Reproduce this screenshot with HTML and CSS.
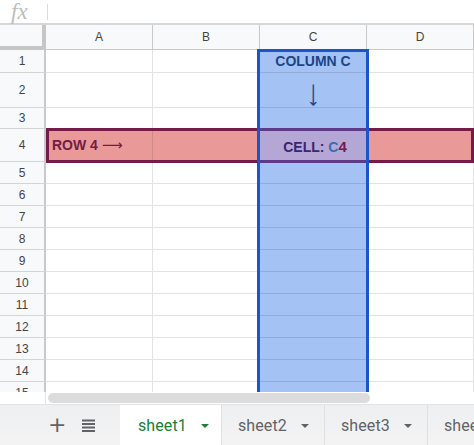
FILE: index.html
```html
<!DOCTYPE html>
<html>
<head>
<meta charset="utf-8">
<link rel="stylesheet" href="styles.css">
</head>
<body>
<div class="formula">
  <span class="fx">fx</span>
  <span class="fsep"></span>
</div>
<div class="sheet">
  <div class="grid">
    <div class="corner"></div>
    <div class="colh">A</div><div class="colh">B</div><div class="colh">C</div><div class="colh">D</div>

    <div class="rowh">1</div><div class="cell"></div><div class="cell"></div><div class="cell colc"><span class="coltext">COLUMN C</span></div><div class="cell"></div>
    <div class="rowh">2</div><div class="cell"></div><div class="cell"></div><div class="cell colc"><span class="downarrow">⟶</span></div><div class="cell"></div>
    <div class="rowh">3</div><div class="cell"></div><div class="cell"></div><div class="cell colc"></div><div class="cell"></div>
    <div class="rowh">4</div><div class="cell row4 left"><span class="rowtext">ROW 4 <span class="rarrow">⟶</span></span></div><div class="cell row4"></div><div class="cell c4"><span class="celltext">CELL: <span class="cblue">C</span><span class="cred">4</span></span></div><div class="cell row4"></div>
    <div class="rowh">5</div><div class="cell"></div><div class="cell"></div><div class="cell colc"></div><div class="cell"></div>
    <div class="rowh">6</div><div class="cell"></div><div class="cell"></div><div class="cell colc"></div><div class="cell"></div>
    <div class="rowh">7</div><div class="cell"></div><div class="cell"></div><div class="cell colc"></div><div class="cell"></div>
    <div class="rowh">8</div><div class="cell"></div><div class="cell"></div><div class="cell colc"></div><div class="cell"></div>
    <div class="rowh">9</div><div class="cell"></div><div class="cell"></div><div class="cell colc"></div><div class="cell"></div>
    <div class="rowh">10</div><div class="cell"></div><div class="cell"></div><div class="cell colc"></div><div class="cell"></div>
    <div class="rowh">11</div><div class="cell"></div><div class="cell"></div><div class="cell colc"></div><div class="cell"></div>
    <div class="rowh">12</div><div class="cell"></div><div class="cell"></div><div class="cell colc"></div><div class="cell"></div>
    <div class="rowh">13</div><div class="cell"></div><div class="cell"></div><div class="cell colc"></div><div class="cell"></div>
    <div class="rowh">14</div><div class="cell"></div><div class="cell"></div><div class="cell colc"></div><div class="cell"></div>
    <div class="rowh">15</div><div class="cell"></div><div class="cell"></div><div class="cell colc"></div><div class="cell"></div>
  </div>
  <div class="rowband"></div>
  <div class="colband"></div>
  <div class="crossband"></div>
</div>
<div class="scrollrow">
  <div class="scrollcorner"></div>
  <div class="scrolltrack"><div class="thumb"></div></div>
</div>
<div class="tabs">
  <div class="tabtools">
    <span class="plus">+</span>
    <svg class="listicon" width="13" height="13" viewBox="0 0 13 13">
      <rect x="0" y="0.5" width="13" height="2" fill="#5f6368"/>
      <rect x="0" y="4" width="13" height="2" fill="#5f6368"/>
      <rect x="0" y="7.5" width="13" height="2" fill="#5f6368"/>
      <rect x="0" y="11" width="13" height="2" fill="#5f6368"/>
    </svg>
  </div>
  <div class="tab active"><span class="tabname">sheet1</span><span class="caret"></span></div>
  <div class="tab"><span class="tabname">sheet2</span><span class="caret"></span></div>
  <div class="tab"><span class="tabname">sheet3</span><span class="caret"></span></div>
  <div class="tab"><span class="tabname">sheet4</span><span class="caret"></span></div>
</div>
</body>
</html>
```
FILE: styles.css
```css
* { box-sizing: border-box; }
html, body { margin: 0; padding: 0; background: #fff; overflow: hidden; }
body { width: 474px; height: 445px; font-family: "Liberation Sans", Arial, sans-serif; }

.formula {
  height: 25px;
  display: flex;
  align-items: center;
  border-bottom: 2px solid #d6d6d6;
  padding-left: 11px;
}
.fx {
  font-family: "Liberation Serif", serif;
  font-style: italic;
  font-size: 23px;
  color: #bdbdbd;
  width: 36px;
  line-height: 23px;
}
.fsep { width: 1px; height: 16px; background: #dadce0; }

.sheet {
  position: relative;
  height: 367px;
  overflow: hidden;
}
.grid {
  display: grid;
  grid-template-columns: 46px 107px 107px 107px 107px;
  grid-template-rows: 25px 23px 35px 21px 33px repeat(11, 22px);
  width: 474px;
}
.grid > div {
  border-right: 1px solid rgba(0, 0, 0, 0.11);
  border-bottom: 1px solid rgba(0, 0, 0, 0.11);
  display: flex;
  align-items: center;
  justify-content: center;
  white-space: nowrap;
}
.corner {
  background: #f8f9fa;
  border-right: 4px solid #c6c6c6 !important;
  border-bottom: 4px solid #c6c6c6 !important;
}
.colh {
  background: #f8f9fa;
  font-size: 12px;
  color: #444;
  border-right: 1px solid #c9c9c9 !important;
  border-bottom: 1px solid #c9c9c9 !important;
}
.rowh {
  background: #f8f9fa;
  font-size: 12px;
  color: #444;
  border-right: 2px solid #c9c9c9 !important;
  border-bottom: 1px solid #d4d4d4 !important;
}
.colc { background: #a4c2f4; }
.row4 { background: #ea9999; }
.c4 { background: #b4a7d6; }
.left { justify-content: flex-start !important; padding-left: 6px; }

.coltext { font-weight: bold; font-size: 14px; color: #1c4587; }
.downarrow {
  display: inline-block;
  font-family: "DejaVu Sans", sans-serif;
  font-size: 16px;
  color: #1c4587;
  line-height: 16px;
  transform: rotate(90deg);
  margin-top: 10px;
}
.rowtext { font-weight: bold; font-size: 14px; color: #741b47; display: flex; align-items: center; }
.rarrow {
  font-family: "DejaVu Sans", sans-serif;
  font-weight: normal;
  font-size: 14.5px;
  margin-left: 4px;
  line-height: 14px;
}
.celltext { font-weight: bold; font-size: 14px; color: #3b2470; margin-top: 3px; margin-left: 4px; }
.cblue { color: #3d6bb3; }
.cred { color: #741b47; font-size: 15px; }

.rowband {
  position: absolute;
  left: 46px;
  top: 103px;
  width: 428px;
  height: 35px;
  border: 3px solid #741b47;
  pointer-events: none;
}
.colband {
  position: absolute;
  left: 257px;
  top: 24px;
  width: 112px;
  height: 400px;
  border: 3px solid #1a56c9;
  pointer-events: none;
}
.crossband {
  position: absolute;
  left: 260px;
  top: 103px;
  width: 106px;
  height: 35px;
  border-top: 3px solid #5d3b86;
  border-bottom: 3px solid #5d3b86;
  pointer-events: none;
}

.scrollrow {
  height: 12px;
  display: flex;
  background: #fff;
}
.scrollcorner { width: 46px; border-right: 1px solid #e6e6e6; }
.scrolltrack { flex: 1; padding: 1px 0 0 2px; }
.thumb { width: 322px; height: 10px; background: #dcdcdc; border-radius: 5px; }

.tabs {
  height: 41px;
  display: flex;
  overflow: hidden;
  background: linear-gradient(#eeeff0, #f3f3f4);
  border-top: 1px solid #e3e3e3;
}
.tabtools {
  width: 120px;
  flex: none;
  display: flex;
  align-items: center;
  padding-left: 48px;
  gap: 16px;
}
.plus {
  font-family: "DejaVu Sans", sans-serif;
  font-size: 22px;
  color: #5f6368;
  line-height: 22px;
}
.listicon { display: block; }
.tab {
  width: 103px;
  flex: none;
  display: flex;
  align-items: center;
  padding-left: 16px;
  border-right: 1px solid #dfe0e1;
  font-family: Roboto, "Liberation Sans", sans-serif;
  font-size: 16px;
  color: #5f6368;
}
.tab.active {
  width: 102px;
  background: #fff;
  color: #188038;
  padding-left: 18px;
}
.tabname { letter-spacing: 0.1px; }
.caret {
  width: 0; height: 0;
  border-left: 4px solid transparent;
  border-right: 4px solid transparent;
  border-top: 4px solid currentColor;
  margin-left: 14px;
  margin-top: 2px;
}
```
